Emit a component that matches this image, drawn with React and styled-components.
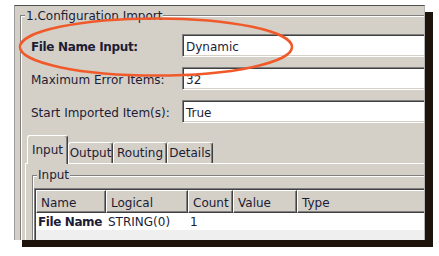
import React from 'react';
import styled, { createGlobalStyle } from 'styled-components';

const GlobalStyle = createGlobalStyle`
  html, body {
    margin: 0;
    padding: 0;
    background: #ffffff;
  }
  body {
    font-family: "DejaVu Sans", Verdana, sans-serif;
    font-size: 12px;
    color: #1c1c36;
  }
`;

const Page = styled.div`
  position: relative;
  width: 439px;
  height: 256px;
  overflow: hidden;
  box-sizing: border-box;
  padding: 5px 0 0 14px;
`;

const Shot = styled.div`
  width: 411px;
  height: 235px;
  box-sizing: border-box;
  background: #d4d0c8;
  border-top: 1px solid #4f4f4f;
  border-left: 1px solid #9c9c9c;
  border-right: 1px solid #b4b4b4;
  box-shadow: 8px 7px 0 #1f140b;
  overflow: hidden;
  padding: 9px 0 0 5px;
`;

const GroupBox = styled.div`
  width: ${p => p.$w}px;
  min-height: 300px;
  border-top: 1px solid #808080;
  border-left: 1px solid #808080;
  box-shadow: inset 1px 1px 0 #ffffff;
`;

const GroupTitle = styled.div`
  width: fit-content;
  margin: ${p => -p.$lift}px 0 0 4px;
  padding: 0 1px;
  line-height: 15px;
  background: #d4d0c8;
  white-space: nowrap;
`;

const Form = styled.div`
  display: flex;
  flex-direction: column;
  gap: 10px;
  margin: 10px 0 0 10px;
`;

const FieldRow = styled.div`
  display: grid;
  grid-template-columns: 151px 420px;
  height: 23px;
`;

const FieldLabel = styled.label`
  padding-top: 6px;
  line-height: 15px;
  white-space: nowrap;
  font-weight: ${p => (p.$bold ? 700 : 400)};
  letter-spacing: ${p => (p.$bold ? '-0.35px' : '0')};
`;

const TextBox = styled.div`
  height: 23px;
  box-sizing: border-box;
  background: #ffffff;
  border-top: 1px solid #808080;
  border-left: 1px solid #808080;
  border-bottom: 1px solid #ffffff;
  border-right: 1px solid #ffffff;
  box-shadow: inset 1px 1px 0 #404040, inset -1px -1px 0 #d4d0c8;
  padding: 5px 0 0 3px;
  line-height: 15px;
`;

const TabControl = styled.div`
  margin: 12px 0 0 4px;
`;

const TabStrip = styled.div`
  display: flex;
  align-items: flex-end;
  height: 28px;
  padding-left: 2px;
`;

const Tab = styled.div`
  position: relative;
  z-index: ${p => (p.$active ? 1 : 0)};
  width: ${p => p.$w}px;
  height: ${p => (p.$active ? 29 : 21)}px;
  margin-bottom: ${p => (p.$active ? -1 : 0)}px;
  box-sizing: border-box;
  display: flex;
  align-items: flex-end;
  justify-content: center;
  padding-bottom: ${p => (p.$active ? 6 : 2)}px;
  background: #d4d0c8;
  border-top: 1px solid #ffffff;
  border-left: 1px solid #ffffff;
  border-right: 1px solid #404040;
  box-shadow: inset -1px 0 0 #808080;
  border-radius: 3px 3px 0 0;
  line-height: 15px;
  white-space: nowrap;
`;

const TabPanel = styled.div`
  height: 120px;
  background: #d4d0c8;
  border-top: 1px solid #ffffff;
  border-left: 1px solid #ffffff;
  padding-top: 11px;
  padding-left: 6px;
`;

const Table = styled.div`
  width: 520px;
  margin: 5px 0 0 1px;
  padding: 1px 0 0 1px;
  background: #ffffff;
  border-top: 1px solid #808080;
  border-left: 1px solid #808080;
  box-shadow: inset 1px 1px 0 #404040;
`;

const columns = '70px 82px 45px 64px 240px';

const HeaderRow = styled.div`
  display: grid;
  grid-template-columns: ${columns};
`;

const HeaderCell = styled.div`
  height: 23px;
  box-sizing: border-box;
  padding: 5px 0 0 4px;
  background: #d4d0c8;
  border-top: 1px solid #ffffff;
  border-left: 1px solid #ffffff;
  border-right: 1px solid #404040;
  border-bottom: 1px solid #404040;
  box-shadow: inset -1px -1px 0 #808080;
  line-height: 15px;
  white-space: nowrap;
`;

const DataRow = styled.div`
  display: grid;
  grid-template-columns: ${columns};
  height: ${p => p.$h}px;
  background: ${p => p.$bg};
`;

const Cell = styled.div`
  padding: 2px 0 0 2px;
  line-height: 15px;
  white-space: nowrap;
  font-weight: ${p => (p.$bold ? 700 : 400)};
  letter-spacing: ${p => (p.$bold ? '-0.4px' : '0')};
`;

const Highlight = styled.svg`
  position: absolute;
  left: 0;
  top: 0;
  pointer-events: none;
`;

const fields = [
  { label: 'File Name Input:', value: 'Dynamic', bold: true },
  { label: 'Maximum Error Items:', value: '32' },
  { label: 'Start Imported Item(s):', value: 'True' },
];

const tabs = [
  { name: 'Input', w: 41, active: true },
  { name: 'Output', w: 45 },
  { name: 'Routing', w: 54 },
  { name: 'Details', w: 46 },
];

const headers = ['Name', 'Logical', 'Count', 'Value', 'Type'];

export default function App() {
  return (
    <Page>
      <GlobalStyle />
      <Shot>
        <GroupBox $w={620}>
          <GroupTitle $lift={7}>1.Configuration Import</GroupTitle>
          <Form>
            {fields.map(f => (
              <FieldRow key={f.label}>
                <FieldLabel $bold={f.bold}>{f.label}</FieldLabel>
                <TextBox>{f.value}</TextBox>
              </FieldRow>
            ))}
          </Form>
          <TabControl>
            <TabStrip>
              {tabs.map(t => (
                <Tab key={t.name} $w={t.w} $active={t.active}>
                  {t.name}
                </Tab>
              ))}
            </TabStrip>
            <TabPanel>
              <GroupBox $w={560}>
                <GroupTitle $lift={8}>Input</GroupTitle>
                <Table>
                  <HeaderRow>
                    {headers.map(h => (
                      <HeaderCell key={h}>{h}</HeaderCell>
                    ))}
                  </HeaderRow>
                  <DataRow $h={17} $bg="#ffffff">
                    <Cell $bold>File Name</Cell>
                    <Cell>STRING(0)</Cell>
                    <Cell>1</Cell>
                    <Cell />
                    <Cell />
                  </DataRow>
                  <DataRow $h={20} $bg="#efefef" />
                </Table>
              </GroupBox>
            </TabPanel>
          </TabControl>
        </GroupBox>
      </Shot>
      <Highlight width="439" height="256" viewBox="0 0 439 256">
        <ellipse
          cx="156"
          cy="47"
          rx="136"
          ry="28.5"
          fill="none"
          stroke="#f05a2a"
          strokeWidth="2.6"
        />
      </Highlight>
    </Page>
  );
}
